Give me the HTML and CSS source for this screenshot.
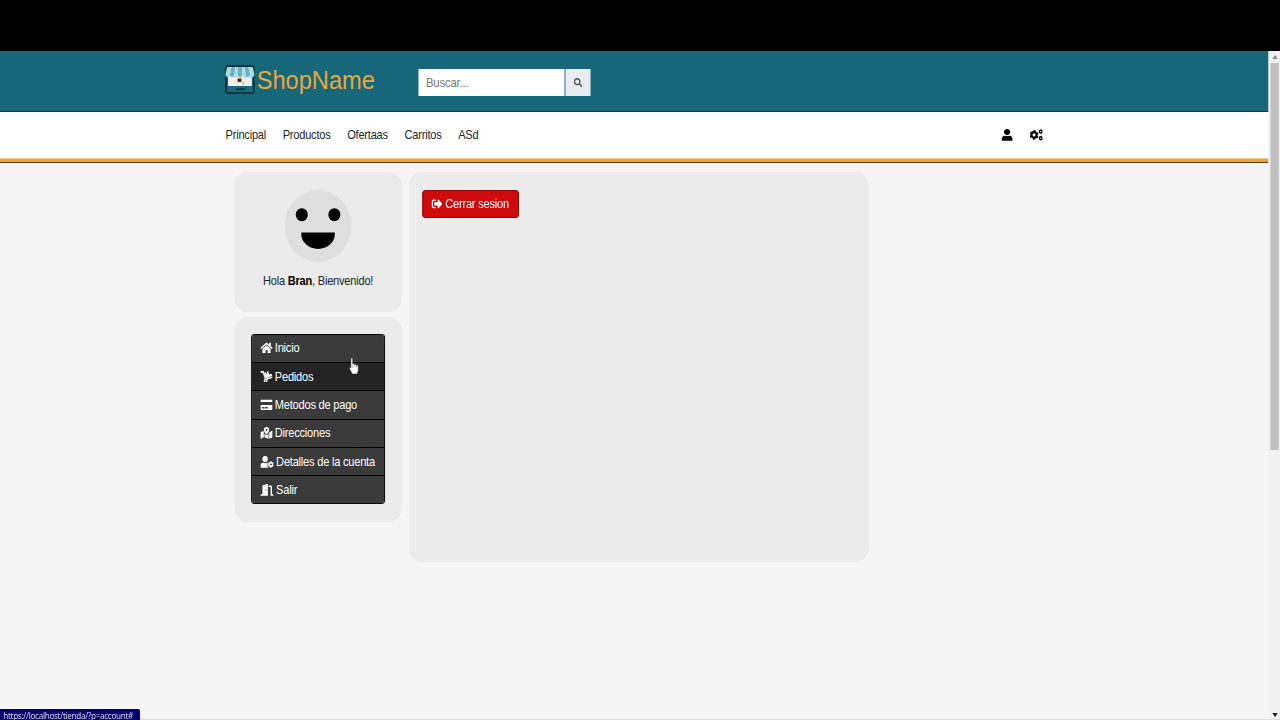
FILE: index.html
```
<!doctype html>
<html lang="es">
  <head>
    <meta charset="UTF-8" />
    <title>ShopName</title>
    <link rel="stylesheet" href="styles.css">
  </head>
  <body>
    <div class="viewport">
    <div class="screen">
      <div class="letterbox"></div>
      <div class="window">
        <div class="page">
          <header class="header">
            <a class="brand">
              <svg class="brand-logo" viewBox="0 0 30 29" preserveAspectRatio="none">
                <rect x="1" y="1" width="28" height="27" rx="2" fill="#176b80" stroke="#07242f" stroke-width="1.500" />
                <path d="M3 8h24v13H3z" fill="#f1eeee" />
                <path d="M2 2h26l1.500 7a2.600 2.600 0 0 1-5.500 1 2.800 2.800 0 0 1-6 0 2.800 2.800 0 0 1-6 0 2.800 2.800 0 0 1-6 0 2.600 2.600 0 0 1-5.500-1z" fill="#a9dce4" />
                <path d="M6.500 2h3.500l-1 8a2.800 2.800 0 0 1-4 1zM13 2h4v8a2 2 0 0 1-4 0zM20 2h3.500l1.500 8a2 2 0 0 1-4 0z" fill="#66b0c2" />
                <path d="M12.500 13.500h4v3.500h-4z" fill="#111" stroke="#e4a24b" />
                <path d="m17.500 17 2 3" stroke="#aaa" />
                <path d="M11 24.200h9" stroke="#07242f" stroke-width="1.500" />
              </svg>
              <span>ShopName</span>
            </a>
            <form class="search">
              <input class="search-input" type="text" placeholder="Buscar..." />
              <button class="search-btn" type="button">
                <svg class="icon" viewBox="0 0 512 512"><path d="M505 442.700L405.300 343c-4.500-4.500-10.600-7-17-7H372c27.600-35.300 44-79.700 44-128C416 93.100 322.900 0 208 0S0 93.100 0 208s93.100 208 208 208c48.300 0 92.700-16.400 128-44v16.300c0 6.400 2.500 12.500 7 17l99.700 99.700c9.400 9.400 24.600 9.400 33.900 0l28.300-28.300c9.400-9.400 9.400-24.600.1-34zM208 336c-70.700 0-128-57.200-128-128 0-70.700 57.200-128 128-128 70.700 0 128 57.200 128 128 0 70.700-57.200 128-128 128z" /></svg>
              </button>
            </form>
          </header>

          <nav class="nav">
            <div class="nav-links">
              <a>Principal</a>
              <a>Productos</a>
              <a>Ofertaas</a>
              <a>Carritos</a>
              <a>ASd</a>
            </div>
            <div class="nav-icons">
              <svg class="icon icon-user" viewBox="0 0 448 512" preserveAspectRatio="none"><path d="M224 256c70.700 0 128-57.300 128-128S294.700 0 224 0 96 57.300 96 128s57.300 128 128 128zm89.600 32h-16.700c-22.200 10.200-46.900 16-72.900 16s-50.600-5.800-72.900-16h-16.700C60.200 288 0 348.200 0 422.400V464c0 26.500 21.500 48 48 48h352c26.500 0 48-21.500 48-48v-41.600c0-74.200-60.200-134.400-134.400-134.400z" /></svg>
              <svg class="icon icon-cogs" viewBox="0 0 640 512">
                <g fill="none" stroke="currentColor">
                  <circle cx="210" cy="256" r="119" stroke-width="98" />
                  <circle cx="210" cy="256" r="180" stroke-width="60" stroke-dasharray="85 103.500" stroke-dashoffset="136" />
                  <circle cx="528" cy="112" r="62" stroke-width="58" />
                  <circle cx="528" cy="112" r="93" stroke-width="34" stroke-dasharray="44 53.400" />
                  <circle cx="528" cy="400" r="62" stroke-width="58" />
                  <circle cx="528" cy="400" r="93" stroke-width="34" stroke-dasharray="44 53.400" />
                </g>
              </svg>
            </div>
          </nav>

          <main class="account">
            <aside class="sidebar">
              <section class="card profile">
                <svg class="avatar" viewBox="0 0 72 72">
                  <circle cx="36" cy="36" r="36" fill="#dedede" />
                  <circle cx="18.500" cy="24.700" r="6.500" />
                  <circle cx="53.500" cy="24.700" r="6.500" />
                  <path d="M18 42.500h36v1.500a18 15 0 0 1-36 0z" />
                </svg>
                <p class="welcome">Hola <b>Bran</b>, Bienvenido!</p>
              </section>

              <section class="card menu-card">
                <div class="menu">
                  <a class="menu-item">
                    <svg class="icon icon-mid" viewBox="0 0 576 512"><path d="M280.370 148.260L96 300.110V464a16 16 0 0 0 16 16l112.060-.29a16 16 0 0 0 15.920-16V368a16 16 0 0 1 16-16h64a16 16 0 0 1 16 16v95.640a16 16 0 0 0 16 16.050L464 480a16 16 0 0 0 16-16V300L295.670 148.260a12.190 12.190 0 0 0-15.300 0zM571.600 251.470L488 182.560V44.050a12 12 0 0 0-12-12h-56a12 12 0 0 0-12 12v72.610L318.470 43a48 48 0 0 0-61 0L4.340 251.470a12 12 0 0 0-1.600 16.900l25.500 31A12 12 0 0 0 45.150 301l235.220-193.740a12.190 12.190 0 0 1 15.300 0L530.900 301a12 12 0 0 0 16.900-1.600l25.500-31a12 12 0 0 0-1.700-16.930z" /></svg>
                    <span>Inicio</span>
                  </a>
                  <a class="menu-item active">
                    <svg class="icon icon-mid" viewBox="0 0 576 512">
                      <path d="M0 12Q0 0 12 0H145Q156 0 160 11L272 327l279-93q12-4 16 8l12 38q3 12-9 16L315 382A84 84 0 1 1 209 353L110 74H12Q0 74 0 62zM240 400a32 32 0 1 0 .1 0z" fill-rule="evenodd" />
                      <path d="M190 67l57-19 24 75 48-16-24-74 60-20q12-4 16 8l42 128 97-30q12-4 16 8l25 74q4 12-8 16L292 303q-12 4-16-8L180 83q-4-12 10-16z" />
                    </svg>
                    <span>Pedidos</span>
                  </a>
                  <a class="menu-item">
                    <svg class="icon icon-mid" viewBox="0 0 576 512"><path d="M0 432c0 26.500 21.500 48 48 48h480c26.500 0 48-21.500 48-48V256H0v176zm192-68c0-6.600 5.400-12 12-12h136c6.600 0 12 5.400 12 12v40c0 6.600-5.400 12-12 12H204c-6.600 0-12-5.400-12-12v-40zm-128 0c0-6.600 5.400-12 12-12h72c6.600 0 12 5.400 12 12v40c0 6.600-5.400 12-12 12H76c-6.600 0-12-5.400-12-12v-40zM576 80v48H0V80c0-26.500 21.500-48 48-48h480c26.500 0 48 21.500 48 48z" /></svg>
                    <span>Metodos de pago</span>
                  </a>
                  <a class="menu-item">
                    <svg class="icon icon-mid" viewBox="0 0 576 512"><path d="M288 0c-69.590 0-126 56.410-126 126 0 56.260 82.350 158.800 113.900 196.020 6.390 7.540 17.820 7.540 24.200 0C331.650 284.800 414 182.260 414 126 414 56.410 357.590 0 288 0zm0 168c-23.200 0-42-18.800-42-42s18.800-42 42-42 42 18.800 42 42-18.800 42-42 42zM20.120 215.950A32.006 32.006 0 0 0 0 245.660v250.320c0 11.320 11.430 19.060 21.940 14.860L160 448V214.920c-8.840-15.980-16.070-31.540-21.250-46.420L20.120 215.950zM288 359.670c-14.070 0-27.380-6.180-36.510-16.960-19.660-23.200-40.570-49.620-59.490-76.720v182l192 64V266c-18.920 27.090-39.820 53.520-59.490 76.720-9.130 10.770-22.440 16.950-36.510 16.950zm266.060-198.510L416 224v288l139.880-55.950A31.996 31.996 0 0 0 576 426.340V176.020c0-11.320-11.430-19.060-21.940-14.860z" /></svg>
                    <span>Direcciones</span>
                  </a>
                  <a class="menu-item">
                    <svg class="icon icon-wide" viewBox="0 0 640 512">
                      <path d="M224 256a128 128 0 1 0 0-256 128 128 0 0 0 0 256zM134 288h17q73 32 146 0h17l24 2q-16 30 8 55-4 26 0 52-24 25-8 55 15 30 42 60H48q-48 0-48-48v-42q0-134 134-134z" />
                      <g fill="none" stroke="currentColor">
                        <circle cx="496" cy="368" r="82" stroke-width="76" />
                        <circle cx="496" cy="368" r="125" stroke-width="42" stroke-dasharray="64 66.900" stroke-dashoffset="98" />
                      </g>
                    </svg>
                    <span>Detalles de la cuenta</span>
                  </a>
                  <a class="menu-item">
                    <svg class="icon icon-wide" viewBox="0 0 640 512"><path d="M624 448h-80V113.450C544 86.190 522.470 64 496 64H384v64h96v384h144c8.840 0 16-7.160 16-16v-32c0-8.840-7.160-16-16-16zM312.240 1.010l-192 49.740C105.990 54.440 96 67.700 96 82.920V448H16c-8.840 0-16 7.160-16 16v32c0 8.840 7.160 16 16 16h336V33.180c0-21.580-19.560-37.410-39.760-32.170zM264 288c-13.250 0-24-14.330-24-32s10.750-32 24-32 24 14.330 24 32-10.750 32-24 32z" /></svg>
                    <span>Salir</span>
                  </a>
                </div>
              </section>
            </aside>

            <section class="card content">
              <button class="logout" type="button">
                <svg class="icon" viewBox="0 0 512 512"><path d="M497 273L329 441c-15 15-41 4.500-41-17v-96H152c-13.300 0-24-10.700-24-24v-96c0-13.300 10.700-24 24-24h136V88c0-21.400 25.900-32 41-17l168 168c9.300 9.400 9.300 24.600 0 34zM192 436v-40c0-6.600-5.400-12-12-12H96c-17.700 0-32-14.300-32-32V160c0-17.700 14.300-32 32-32h84c6.600 0 12-5.400 12-12V76c0-6.600-5.400-12-12-12H96c-53 0-96 43-96 96v192c0 53 43 96 96 96h84c6.600 0 12-5.400 12-12z" /></svg>
                <span>Cerrar sesion</span>
              </button>
            </section>
          </main>
        </div>

        <div class="scrollbar">
          <svg class="arrow arrow-up" viewBox="0 0 6 4"><path d="M3 0l3 4H0z" /></svg>
          <div class="thumb"></div>
          <svg class="arrow arrow-down" viewBox="0 0 6 4"><path d="M0 0h6L3 4z" /></svg>
        </div>
      </div>

      <div class="status">https://localhost/tienda/?p=account#</div>
      <svg class="cursor" viewBox="0 0 11 18" preserveAspectRatio="none">
        <path d="M2.200 1.500q1.200-1.200 1.900.3V7l1-.5q1 0 1.100 1 1.500-.7 1.700.7 1.700-.4 1.900 1v4.300l-1.300 3.500H3.700L.6 11.300q-.5-1.500.6-1.300l1 1.200z" fill="#fff" stroke="#222" stroke-width=".5" />
        <path d="M4.200 7.500v3M6.200 7.800v2.700M8 8.500v2" stroke="#333" stroke-width=".4" />
      </svg>
    </div>
    </div>
  </body>
</html>
```

FILE: styles.css
```
* {
  box-sizing: border-box;
}
body {
  margin: 0;
  overflow: hidden;
  background-color: #f5f5f5;
}
.viewport {
  width: 1280px;
  height: 720px;
  overflow: hidden;
}
/* everything is drawn slightly narrower than tall */
.screen {
  position: relative;
  width: 1377px;
  height: 720px;
  overflow: hidden;
  transform: scaleX(0.93);
  transform-origin: 0 0;
  font-family: "Liberation Sans", Arial, sans-serif;
  font-size: 11.9px;
  letter-spacing: -0.23px;
  color: #212529;
}
.letterbox {
  height: 51px;
  background-color: #000;
}
.window {
  display: flex;
  height: 668.5px;
  border-bottom: 1px solid #ddd;
}
.page {
  flex: 1;
  background-color: #f5f5f5;
}
.icon {
  flex: none;
  width: 11.8px;
  height: 11.8px;
  fill: currentColor;
}
.icon-user {
  width: 11.8px;
}
.icon-cogs {
  width: 14.8px;
}
.icon-mid {
  width: 13.2px;
}
.icon-wide {
  width: 14.6px;
}

.header {
  display: flex;
  align-items: center;
  height: 61px;
  padding: 0 0 2px 241.5px;
  background-color: #156779;
  border-bottom: 1px solid #103845;
}
.brand {
  display: flex;
  align-items: center;
  width: 208px;
  color: #e9a83c;
  font-size: 25.4px;
  line-height: 30px;
  letter-spacing: 0;
}
.brand-logo {
  width: 32px;
  height: 29px;
  margin: 0 2.5px 1px 0;
}
.search {
  display: flex;
  height: 27px;
  margin-top: 5px;
}
.search-input {
  width: 157px;
  padding: 0 8.5px;
  border: 0;
  font: inherit;
  font-size: 12.2px;
  letter-spacing: -0.2px;
  background-color: #fff;
}
.search-input::placeholder {
  color: #777;
}
.search-btn {
  display: flex;
  align-items: center;
  justify-content: center;
  width: 27px;
  margin-left: 1px;
  padding: 0;
  border: 0;
  background-color: #e9ecef;
  color: #495057;
}
.search-btn .icon {
  width: 9px;
  height: 9px;
}

.nav {
  display: flex;
  justify-content: space-between;
  height: 51px;
  padding: 0 243px 0 242.5px;
  background-color: #fff;
  border-bottom: 1.5px solid #6b3a1c;
  box-shadow: inset 0 -3.5px #eaa338;
}
.nav-links,
.nav-icons {
  display: flex;
  align-items: center;
  height: 46px;
}
.nav-links {
  gap: 17.9px;
}
.nav-icons {
  gap: 17.5px;
  color: #000;
}

.account {
  display: flex;
  align-items: flex-start;
  gap: 7.5px;
  padding: 9px 0 0 252px;
}
.card {
  background-color: #ebebeb;
  border-radius: 14px;
}
.sidebar {
  display: flex;
  flex-direction: column;
  gap: 4.5px;
  width: 180px;
}
.profile {
  display: flex;
  flex-direction: column;
  align-items: center;
  height: 140px;
  padding-top: 17.5px;
}
.avatar {
  width: 72px;
  height: 72px;
}
.welcome {
  margin: 12px 0 0;
  line-height: 14px;
}
.welcome b {
  color: #000;
}
.menu-card {
  height: 205px;
  padding: 17px 18px;
}
.menu {
  overflow: hidden;
  border: 1px solid #000;
  border-radius: 3px;
}
.menu-item {
  display: flex;
  align-items: center;
  gap: 2.8px;
  height: 28.4px;
  padding: 0 8.5px;
  border-bottom: 1.5px solid #000;
  background-color: #3a3a3a;
  color: #fff;
  white-space: nowrap;
}
.menu-item:last-child {
  height: 27px;
  border-bottom: 0;
}
.menu-item.active {
  background-color: #242424;
}
.content {
  width: 494.5px;
  height: 390px;
  padding: 18px 14px;
}
.logout {
  display: flex;
  align-items: center;
  gap: 3.5px;
  width: 104px;
  height: 28px;
  padding: 0 9px 1px;
  border: 1px solid #850606;
  border-radius: 3px;
  background-color: #cf0a0a;
  color: #fff;
  font: inherit;
  letter-spacing: inherit;
  white-space: nowrap;
}

.scrollbar {
  display: flex;
  flex-direction: column;
  align-items: center;
  width: 12.6px;
  background-color: #f1f1f1;
}
.arrow {
  width: 6px;
  height: 4px;
  fill: #8a8a8a;
}
.arrow-up {
  margin: 4px 0;
}
.arrow-down {
  margin: auto 0 1.5px;
  fill: #222;
}
.thumb {
  width: 9.5px;
  height: 387px;
  background-color: #c1c1c1;
}

.status {
  position: absolute;
  left: 0;
  bottom: 0;
  width: 150.5px;
  height: 11.5px;
  padding-left: 3.5px;
  border-radius: 0 3px 0 0;
  background-color: #08006f;
  color: #d5d3ea;
  font-family: "Noto Sans", sans-serif;
  font-size: 8.7px;
  line-height: 14px;
  letter-spacing: -0.32px;
  white-space: nowrap;
}
.cursor {
  position: absolute;
  left: 375px;
  top: 357px;
  width: 11.5px;
  height: 18px;
}
```
